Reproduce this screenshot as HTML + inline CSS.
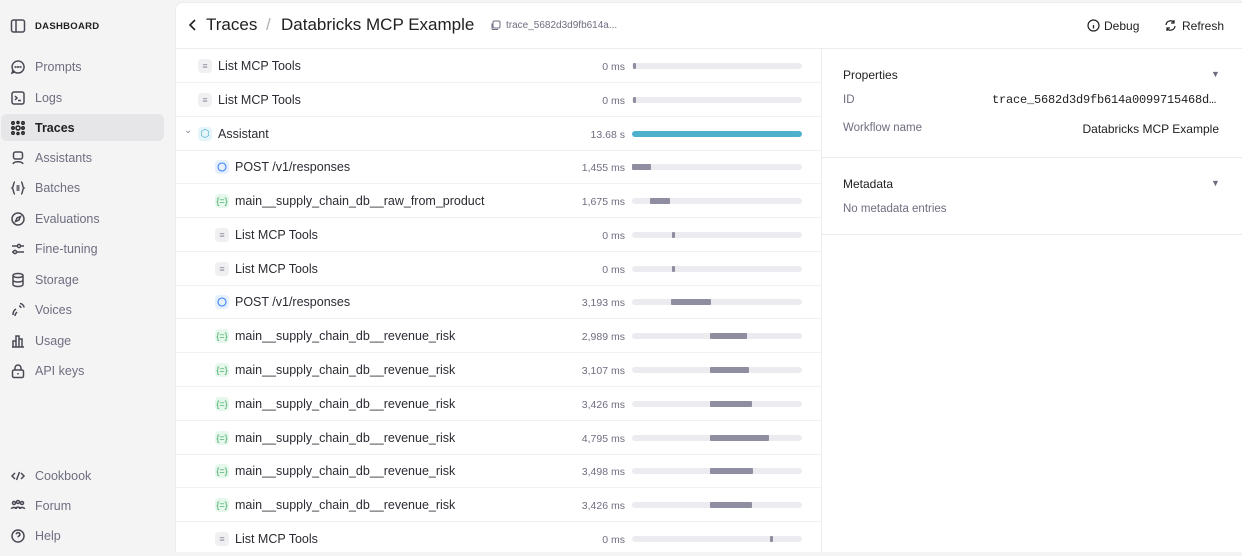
<!DOCTYPE html>
<html><head><meta charset="utf-8"><style>
*{box-sizing:border-box;margin:0;padding:0}
body{width:1242px;height:552px;overflow:hidden;background:#f4f4f5;font-family:"Liberation Sans",sans-serif;position:relative;color:#202123}
.abs{position:absolute}
.nav{position:absolute;left:10px;font-size:12.5px;color:#6e6e80;display:flex;align-items:center;height:20px}
.nav svg{width:16px;height:16px;margin-right:9px;stroke:#4a4a55;fill:none;stroke-width:1.5}
.sel{position:absolute;left:1px;top:114px;width:163px;height:27px;background:#e6e6e9;border-radius:6px}
.main{position:absolute;left:175px;top:2px;width:1075px;height:550px;background:#fff;border-radius:8px 0 0 0;border:1px solid #ececf0;border-bottom:none}
.row{position:absolute;left:175px;width:646px;height:34px;border-bottom:1px solid #f1f1f3;font-size:12.5px;color:#2b2b33}
.row .ic{position:absolute;top:10px;width:14px;height:14px;border-radius:4px;font-size:9px;text-align:center;line-height:14px}
.row .t{position:absolute;top:10px}
.row .d{position:absolute;right:196px;top:12px;font-size:10.5px;color:#6e6e80}
.row .tr{position:absolute;left:457px;top:14px;width:170px;height:6px;border-radius:3px;background:#ececf0}
.row .seg{position:absolute;top:14px;height:6px;background:#8e8ea0;border-radius:1px}
.lst{background:#f0f0f2;color:#8e8ea0}
.fn{background:#e6f7ec;color:#3aa85f}
.po{background:#e6f0ff}
.lbl{position:absolute;font-size:11.5px;color:#6e6e80}
</style></head><body>
<div class="sel"></div>
<div class="nav" style="top:16px;font-size:9.5px;font-weight:bold;color:#202123;letter-spacing:.3px"><svg viewBox="0 0 16 16"><rect x="1.5" y="2" width="13" height="12" rx="2"/><path d="M6 2v12"/></svg>DASHBOARD</div>
<div class="nav" style="top:57px"><svg viewBox="0 0 16 16"><path d="M8 2a6 6 0 1 1-5 9.3L2 14l2.7-1A6 6 0 0 1 8 2z"/><circle cx="5.5" cy="8" r=".4"/><circle cx="8" cy="8" r=".4"/><circle cx="10.5" cy="8" r=".4"/></svg>Prompts</div>
<div class="nav" style="top:88px"><svg viewBox="0 0 16 16"><rect x="2" y="2" width="12" height="12" rx="2"/><path d="M5 6l2 2-2 2M8 10.5h3"/></svg>Logs</div>
<div class="nav" style="top:118px;color:#202123;font-weight:bold"><svg viewBox="0 0 16 16" style="stroke:#202123"><circle cx="8" cy="8" r="2"/><circle cx="3" cy="3" r="1.2"/><circle cx="13" cy="3" r="1.2"/><circle cx="3" cy="13" r="1.2"/><circle cx="13" cy="13" r="1.2"/><circle cx="3" cy="8" r="1.2"/><circle cx="13" cy="8" r="1.2"/><circle cx="8" cy="2.5" r="1"/><circle cx="8" cy="13.5" r="1"/></svg>Traces</div>
<div class="nav" style="top:148px"><svg viewBox="0 0 16 16"><rect x="3.5" y="2" width="9" height="7" rx="2"/><path d="M6 5.5h.1M10 5.5h.1M3 14c1-3 9-3 10 0"/></svg>Assistants</div>
<div class="nav" style="top:178px"><svg viewBox="0 0 16 16"><path d="M5 2C3 2 4 7 2 8c2 1 1 6 3 6M11 2c2 0 1 5 3 6-2 1-1 6-3 6M6.5 6h3M6.5 8h3M6.5 10h3"/></svg>Batches</div>
<div class="nav" style="top:209px"><svg viewBox="0 0 16 16"><circle cx="8" cy="8" r="6"/><path d="M10.5 5.5l-1.5 3.5-3.5 1.5 1.5-3.5z"/></svg>Evaluations</div>
<div class="nav" style="top:239px"><svg viewBox="0 0 16 16"><path d="M2 5h12M2 11h12"/><circle cx="9" cy="5" r="1.6" fill="#f4f4f5"/><circle cx="5" cy="11" r="1.6" fill="#f4f4f5"/></svg>Fine-tuning</div>
<div class="nav" style="top:270px"><svg viewBox="0 0 16 16"><ellipse cx="8" cy="3.5" rx="5" ry="2"/><path d="M3 3.5v9c0 1.1 2.2 2 5 2s5-.9 5-2v-9M3 8c0 1.1 2.2 2 5 2s5-.9 5-2"/></svg>Storage</div>
<div class="nav" style="top:300px"><svg viewBox="0 0 16 16"><path d="M3 13c0-3 1-5 3-6M5 14c0-2 1-3 2-4M9 4c1 0 2 1 2 2M10 1.5c2 0 4 2 4 4"/></svg>Voices</div>
<div class="nav" style="top:331px"><svg viewBox="0 0 16 16"><path d="M2 14h12M3 14V8h3v6M6 14V3h3v11M9 14V6h3v8"/></svg>Usage</div>
<div class="nav" style="top:361px"><svg viewBox="0 0 16 16"><rect x="2.5" y="7" width="11" height="7.5" rx="1.5"/><path d="M5 7V5a3 3 0 0 1 6 0v2M8 10v1.5"/></svg>API keys</div>
<div class="nav" style="top:466px"><svg viewBox="0 0 16 16"><path d="M5 5L2 8l3 3M11 5l3 3-3 3M9.5 4l-3 8"/></svg>Cookbook</div>
<div class="nav" style="top:496px"><svg viewBox="0 0 16 16"><circle cx="4" cy="5" r="1.5"/><circle cx="8" cy="4" r="1.5"/><circle cx="12" cy="5" r="1.5"/><path d="M1.5 11c0-2 5-2 5 0M5.5 11c0-2.5 5-2.5 5 0M9.5 11c0-2 5-2 5 0"/></svg>Forum</div>
<div class="nav" style="top:526px"><svg viewBox="0 0 16 16"><circle cx="8" cy="8" r="6"/><path d="M6.3 6.3a1.8 1.8 0 1 1 2.3 1.8c-.5.2-.6.5-.6 1.2M8 11h.1"/></svg>Help</div>

<div class="main"></div>
<div class="abs" style="left:175px;top:48px;width:1067px;height:1px;background:#ececf0"></div>
<div class="abs" style="left:821px;top:49px;width:1px;height:503px;background:#ececf0"></div>
<svg class="abs" style="left:188px;top:18px" width="10" height="14" viewBox="0 0 10 14"><path d="M7 2L2 7l5 5" stroke="#202123" stroke-width="1.6" fill="none"/></svg>
<div class="abs" style="left:206px;top:15px;font-size:17px;color:#202123">Traces</div>
<div class="abs" style="left:266px;top:15px;font-size:17px;color:#b0b0b8">/</div>
<div class="abs" style="left:281px;top:15px;font-size:17px;color:#202123">Databricks MCP Example</div>
<svg class="abs" style="left:490px;top:20px" width="11" height="11" viewBox="0 0 11 11"><rect x="3" y="1" width="7" height="7" rx="1.5" stroke="#6e6e80" fill="none"/><path d="M2 3.5v5a1 1 0 0 0 1 1h5" stroke="#6e6e80" fill="none"/></svg>
<div class="abs" style="left:506px;top:20px;font-size:10px;color:#6e6e80">trace_5682d3d9fb614a...</div>
<svg class="abs" style="left:1087px;top:19px" width="13" height="13" viewBox="0 0 13 13"><circle cx="6.5" cy="6.5" r="5.5" stroke="#202123" fill="none" stroke-width="1.2"/><path d="M6.5 6v3.5M6.5 4v.1" stroke="#202123" stroke-width="1.3"/></svg>
<div class="abs" style="left:1104px;top:19px;font-size:12px;color:#202123">Debug</div>
<svg class="abs" style="left:1164px;top:19px" width="13" height="13" viewBox="0 0 13 13"><path d="M2 6a4.5 4.5 0 0 1 8-2.5M11 7a4.5 4.5 0 0 1-8 2.5M10 1v3H7M3 12V9h3" stroke="#202123" fill="none" stroke-width="1.2"/></svg>
<div class="abs" style="left:1182px;top:19px;font-size:12px;color:#202123">Refresh</div>

<div class="row" style="top:49px"><div class="ic lst" style="left:23px">≡</div><div class="t" style="left:43px">List MCP Tools</div><div class="d">0 ms</div><div class="tr"></div><div class="seg" style="left:458px;width:3px"></div></div>
<div class="row" style="top:83px"><div class="ic lst" style="left:23px">≡</div><div class="t" style="left:43px">List MCP Tools</div><div class="d">0 ms</div><div class="tr"></div><div class="seg" style="left:458px;width:3px"></div></div>
<div class="row" style="top:117px"><div class="abs" style="left:9px;top:8px;font-size:10px;color:#8e8ea0">⌄</div><div class="ic" style="left:23px;background:#e6f5fa;color:#4fb0cc;font-size:11px">⬡</div><div class="t" style="left:43px">Assistant</div><div class="d">13.68 s</div><div class="seg" style="left:457px;width:170px;background:#4fb0cc;border-radius:3px"></div></div>
<div class="row" style="top:150px"><div class="ic po" style="left:40px"><svg width="14" height="14" viewBox="0 0 14 14"><circle cx="7" cy="7" r="4" stroke="#3b82f6" fill="none" stroke-width="1.1"/></svg></div><div class="t" style="left:60px">POST /v1/responses</div><div class="d">1,455 ms</div><div class="tr"></div><div class="seg" style="left:457px;width:19px"></div></div>
<div class="row" style="top:184px"><div class="ic fn" style="left:40px">{=}</div><div class="t" style="left:60px">main__supply_chain_db__raw_from_product</div><div class="d">1,675 ms</div><div class="tr"></div><div class="seg" style="left:475px;width:20px"></div></div>
<div class="row" style="top:218px"><div class="ic lst" style="left:40px">≡</div><div class="t" style="left:60px">List MCP Tools</div><div class="d">0 ms</div><div class="tr"></div><div class="seg" style="left:497px;width:3px"></div></div>
<div class="row" style="top:252px"><div class="ic lst" style="left:40px">≡</div><div class="t" style="left:60px">List MCP Tools</div><div class="d">0 ms</div><div class="tr"></div><div class="seg" style="left:497px;width:3px"></div></div>
<div class="row" style="top:285px"><div class="ic po" style="left:40px"><svg width="14" height="14" viewBox="0 0 14 14"><circle cx="7" cy="7" r="4" stroke="#3b82f6" fill="none" stroke-width="1.1"/></svg></div><div class="t" style="left:60px">POST /v1/responses</div><div class="d">3,193 ms</div><div class="tr"></div><div class="seg" style="left:496px;width:40px"></div></div>
<div class="row" style="top:319px"><div class="ic fn" style="left:40px">{=}</div><div class="t" style="left:60px">main__supply_chain_db__revenue_risk</div><div class="d">2,989 ms</div><div class="tr"></div><div class="seg" style="left:535px;width:37px"></div></div>
<div class="row" style="top:353px"><div class="ic fn" style="left:40px">{=}</div><div class="t" style="left:60px">main__supply_chain_db__revenue_risk</div><div class="d">3,107 ms</div><div class="tr"></div><div class="seg" style="left:535px;width:39px"></div></div>
<div class="row" style="top:387px"><div class="ic fn" style="left:40px">{=}</div><div class="t" style="left:60px">main__supply_chain_db__revenue_risk</div><div class="d">3,426 ms</div><div class="tr"></div><div class="seg" style="left:535px;width:42px"></div></div>
<div class="row" style="top:421px"><div class="ic fn" style="left:40px">{=}</div><div class="t" style="left:60px">main__supply_chain_db__revenue_risk</div><div class="d">4,795 ms</div><div class="tr"></div><div class="seg" style="left:535px;width:59px"></div></div>
<div class="row" style="top:454px"><div class="ic fn" style="left:40px">{=}</div><div class="t" style="left:60px">main__supply_chain_db__revenue_risk</div><div class="d">3,498 ms</div><div class="tr"></div><div class="seg" style="left:535px;width:43px"></div></div>
<div class="row" style="top:488px"><div class="ic fn" style="left:40px">{=}</div><div class="t" style="left:60px">main__supply_chain_db__revenue_risk</div><div class="d">3,426 ms</div><div class="tr"></div><div class="seg" style="left:535px;width:42px"></div></div>
<div class="row" style="top:522px;border-bottom:none"><div class="ic lst" style="left:40px">≡</div><div class="t" style="left:60px">List MCP Tools</div><div class="d">0 ms</div><div class="tr"></div><div class="seg" style="left:595px;width:3px"></div></div>

<div class="abs" style="left:843px;top:68px;font-size:12px;color:#202123">Properties</div>
<div class="abs" style="left:1211px;top:69px;font-size:9px;color:#6e6e80">▼</div>
<div class="lbl" style="left:843px;top:94px">ID</div>
<div class="abs" style="left:992px;top:93px;font-size:12px;font-family:'Liberation Mono',monospace;color:#202123;letter-spacing:-.2px">trace_5682d3d9fb614a0099715468d…</div>
<div class="lbl" style="left:843px;top:122px">Workflow name</div>
<div class="abs" style="right:23px;top:122px;font-size:12px;color:#202123">Databricks MCP Example</div>
<div class="abs" style="left:822px;top:157px;width:420px;height:1px;background:#ececf0"></div>
<div class="abs" style="left:843px;top:177px;font-size:12px;color:#202123">Metadata</div>
<div class="abs" style="left:1211px;top:178px;font-size:9px;color:#6e6e80">▼</div>
<div class="lbl" style="left:843px;top:203px">No metadata entries</div>
<div class="abs" style="left:822px;top:234px;width:420px;height:1px;background:#ececf0"></div>
</body></html>
